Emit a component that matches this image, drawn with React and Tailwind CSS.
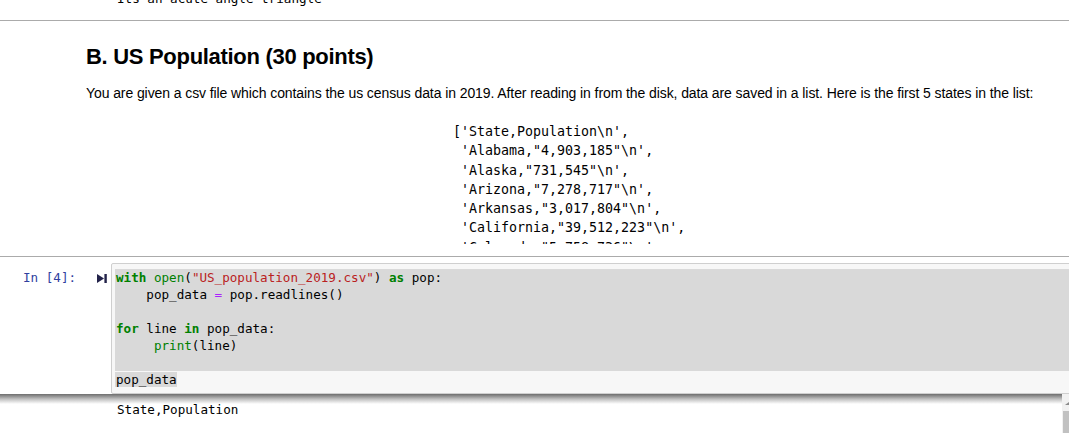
export default function App() {
  const mono = "font-['DejaVu_Sans_Mono',monospace]";
  const kw = "text-[#008000] font-bold";
  const bi = "text-[#008000]";
  const str = "text-[#BA2121]";
  const op = "text-[#AA22FF]";
  const listLines = [
    "['State,Population\\n',",
    " 'Alabama,\"4,903,185\"\\n',",
    " 'Alaska,\"731,545\"\\n',",
    " 'Arizona,\"7,278,717\"\\n',",
    " 'Arkansas,\"3,017,804\"\\n',",
    " 'California,\"39,512,223\"\\n',",
    " 'Colorado,\"5,758,736\"\\n',",
  ];
  return (
    <div className="w-[1069px] h-[433px] overflow-hidden bg-white text-black font-['Liberation_Sans',Arial,sans-serif]">
      {/* markdown / previous output area */}
      <div className="h-[244px] overflow-hidden">
        <div className="h-[20px] overflow-hidden">
          <div className={`-mt-[10px] pl-[117px] text-[12.6px] leading-[17px] whitespace-pre ${mono}`}>
            Its an acute angle triangle
          </div>
        </div>
        <div className="h-px bg-[#ababab]" />
        <div className="pl-[86px] pt-[23px]">
          <h2 className="text-[22px] leading-[26px] font-bold tracking-[-0.3px]">B. US Population (30 points)</h2>
          <p className="mt-[13px] text-[14px] leading-[20px] tracking-[-0.09px]">
            You are given a csv file which contains the us census data in 2019. After reading in from the disk, data are saved in a list. Here is the first 5 states in the list:
          </p>
          <div className={`mt-[19px] pl-[367px] text-[13.3px] leading-[19.3px] whitespace-pre ${mono}`}>
            {listLines.map((l, i) => (
              <div key={i}>{l}</div>
            ))}
          </div>
        </div>
      </div>
      <div className="h-[12px]" />
      <div className="h-px bg-[#ababab]" />
      <div className="h-[6px]" />

      {/* code cell */}
      <div className="flex items-start">
        <div className={`w-[94px] shrink-0 pl-[23px] pt-[6px] text-[12.6px] leading-[17px] text-[#303F9F] whitespace-pre ${mono}`}>
          In [4]:
        </div>
        <div className="w-[17px] shrink-0 pl-[3px] pt-[11px]">
          <svg width="10" height="9" viewBox="0 0 10 9" className="block">
            <polygon points="0,0 7,4.5 0,9" fill="#23234a" />
            <rect x="7.4" y="0" width="2.4" height="9" fill="#23234a" />
          </svg>
        </div>
        <div className="w-[1000px] shrink-0 border border-[#cfcfcf] rounded-[2px] bg-[#f7f7f7] pt-[5px] pb-[5px] px-[3px]">
          <div className={`text-[12.6px] leading-[17px] whitespace-pre text-black ${mono}`}>
            <div className="bg-[#d9d9d9]">
              <div className="pl-[1px]">
                <span className={kw}>with</span> <span className={bi}>open</span>(<span className={str}>"US_population_2019.csv"</span>) <span className={kw}>as</span> pop:
              </div>
              <div className="pl-[1px]">
                {"    pop_data "}<span className={op}>=</span> pop.readlines()
              </div>
              <div className="pl-[1px]">{" "}</div>
              <div className="pl-[1px]">
                <span className={kw}>for</span> line <span className={kw}>in</span> pop_data:
              </div>
              <div className="pl-[1px]">
                {"     "}<span className={bi}>print</span>(line)
              </div>
              <div className="pl-[1px]">{" "}</div>
            </div>
            <div>
              <span className="bg-[#d9d9d9] pl-[1px]">pop_data</span>
            </div>
          </div>
        </div>
      </div>

      {/* output area */}
      <div className="flex h-[60px]">
        <div className="relative flex-1">
          <div className="absolute left-0 right-0 top-0 h-[10px] bg-linear-to-b from-[#6e6e6e] via-[#c0c0c0] to-[#ffffff00]" />
          <div className={`pl-[117px] pt-[7px] text-[12.6px] leading-[17px] whitespace-pre text-black ${mono}`}>
            State,Population
          </div>
        </div>
        <div className="w-[7px] shrink-0 bg-[#f1f1f1] flex flex-col items-end">
          <div className="h-[8px]" />
          <svg width="4" height="3" viewBox="0 0 4 3" className="block">
            <polygon points="4,0 4,3 0,3" fill="#8a8a8a" />
          </svg>
          <div className="h-[6px]" />
          <div className="w-[6px] flex-1 bg-[#c1c1c1]" />
        </div>
      </div>
    </div>
  );
}
